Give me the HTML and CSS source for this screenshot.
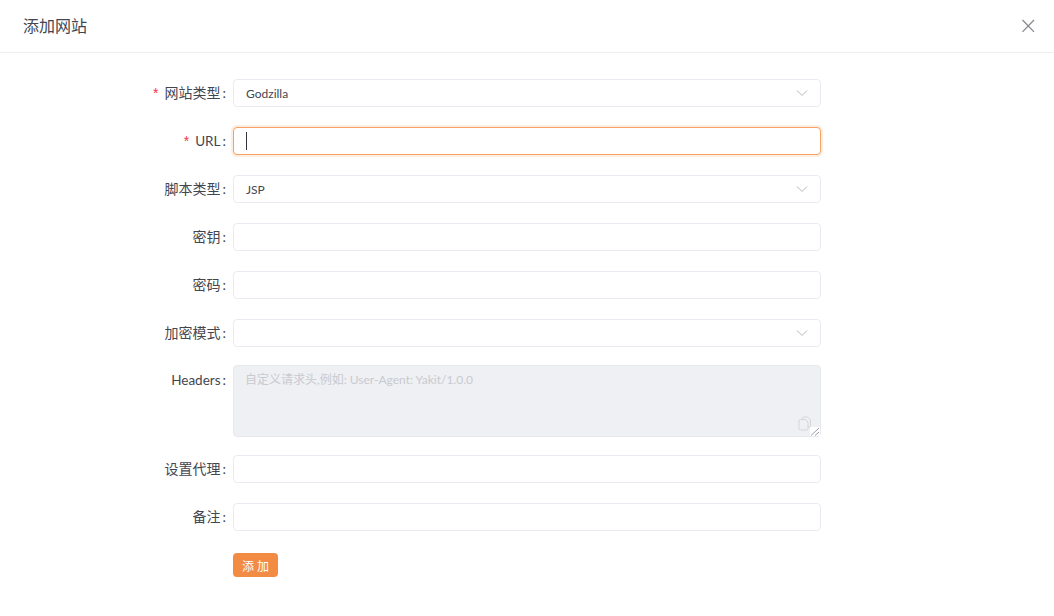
FILE: index.html
```html
<!DOCTYPE html>
<html lang="zh-CN">
<head>
    <meta charset="UTF-8">
    <meta name="viewport" content="width=device-width, initial-scale=1.0">
    <title>添加网站</title>
    <link rel="stylesheet" href="styles.css">
</head>
<body>
    <div class="modal">
        <header class="modal-header">
            <h1>添加网站</h1>
            <svg class="close-icon" width="14" height="14" viewBox="0 0 14 14">
                <path d="M1.5 1L13 12.8M13 1L1.5 12.8" stroke="#85868c" stroke-width="1.2" fill="none"/>
            </svg>
        </header>

        <form class="site-form">
            <div class="form-row">
                <label class="form-label"><span class="required">*</span>网站类型</label>
                <div class="field select-field">
                    <span class="select-value">Godzilla</span>
                    <svg class="arrow" width="12" height="8" viewBox="0 0 12 8"><path d="M1 1.5L6 6.5L11 1.5" stroke="#b4b8c2" fill="none"/></svg>
                </div>
            </div>

            <div class="form-row">
                <label class="form-label"><span class="required">*</span><span class="latin">URL</span></label>
                <div class="field field-focus"><span class="caret"></span></div>
            </div>

            <div class="form-row">
                <label class="form-label">脚本类型</label>
                <div class="field select-field">
                    <span class="select-value">JSP</span>
                    <svg class="arrow" width="12" height="8" viewBox="0 0 12 8"><path d="M1 1.5L6 6.5L11 1.5" stroke="#b4b8c2" fill="none"/></svg>
                </div>
            </div>

            <div class="form-row">
                <label class="form-label">密钥</label>
                <div class="field"></div>
            </div>

            <div class="form-row">
                <label class="form-label">密码</label>
                <div class="field"></div>
            </div>

            <div class="form-row">
                <label class="form-label">加密模式</label>
                <div class="field select-field">
                    <span class="select-value"></span>
                    <svg class="arrow" width="12" height="8" viewBox="0 0 12 8"><path d="M1 1.5L6 6.5L11 1.5" stroke="#b4b8c2" fill="none"/></svg>
                </div>
            </div>

            <div class="form-row form-row-area">
                <label class="form-label"><span class="latin">Headers</span></label>
                <div class="area-wrap">
                    <textarea class="area" placeholder="自定义请求头,例如: User-Agent: Yakit/1.0.0"></textarea>
                    <svg class="copy-icon" width="14" height="15" viewBox="0 0 14 15">
                        <path d="M4.5 3.5V2.5A1.5 1.5 0 0 1 6 1H9.5L12.5 4V9.5A1.5 1.5 0 0 1 11 11H10" stroke="#d3d5dc" fill="none"/>
                        <path d="M2.5 3.5H7.5L10 6V12.5A1.5 1.5 0 0 1 8.5 14H2.5A1.5 1.5 0 0 1 1 12.5V5A1.5 1.5 0 0 1 2.5 3.5Z" stroke="#d3d5dc" fill="none"/>
                    </svg>
                    <svg class="resize-grip" width="10" height="9" viewBox="0 0 10 9">
                        <path d="M0 0H10V9H0Z" fill="white"/>
                        <path d="M1 8.5L9 1M5 8.5L9 5" stroke="#9c9ea8" fill="none"/>
                    </svg>
                </div>
            </div>

            <div class="form-row">
                <label class="form-label">设置代理</label>
                <div class="field"></div>
            </div>

            <div class="form-row">
                <label class="form-label">备注</label>
                <div class="field"></div>
            </div>

            <div class="form-actions">
                <button type="button" class="add-button">添 加</button>
            </div>
        </form>
    </div>
</body>
</html>
```

FILE: styles.css
```css
* {
    margin: 0;
    padding: 0;
    box-sizing: border-box;
}

body {
    font-family: "Lato", "Noto Sans CJK SC", sans-serif;
    font-size: 12px;
    width: 1054px;
    height: 616px;
    background: white;
    color: #44464f;
    overflow: hidden;
}

.modal-header {
    height: 53px;
    padding: 0 19px 0 23px;
    border-bottom: 1px solid #eeeff3;
    display: flex;
    align-items: center;
    justify-content: space-between;
}

.modal-header h1 {
    font-size: 16px;
    font-weight: 400;
    line-height: 26px;
}

.site-form {
    padding-top: 26px;
    display: flex;
    flex-direction: column;
    gap: 20px;
}

.form-row {
    display: flex;
    height: 28px;
}

.form-row-area {
    height: 72px;
    margin: -2px 0;
}

.form-label {
    width: 233px;
    padding-right: 7px;
    font-size: 14px;
    line-height: 28px;
    text-align: right;
}

.form-label::after {
    content: ":";
    margin-left: 2px;
}

.form-row-area .form-label {
    line-height: 30px;
}

.latin {
    font-size: 13.5px;
}

.required {
    color: #f5343f;
    margin-right: 6px;
    font-family: "Liberation Sans", sans-serif;
}

.field {
    width: 588px;
    height: 28px;
    background: white;
    border: 1px solid #e9ebf2;
    border-radius: 4px;
    display: flex;
    align-items: center;
    padding: 0 12px;
}

.select-field {
    justify-content: space-between;
}

.select-value {
    font-size: 12px;
}

.field-focus {
    border-color: #f6a165;
    box-shadow: 0 0 0 2px #fdeee2;
}

.caret {
    width: 1px;
    height: 18px;
    background: #31343f;
}

.area-wrap {
    position: relative;
    width: 588px;
    height: 72px;
}

.area {
    display: block;
    width: 588px;
    height: 72px;
    padding: 5px 11px;
    background: #eff0f3;
    border: 1px solid #e8e9ee;
    border-radius: 4px;
    font-family: inherit;
    font-size: 12px;
    line-height: 18px;
    resize: none;
    outline: none;
}

.area::placeholder {
    color: #c8cad1;
}

.copy-icon {
    position: absolute;
    right: 9px;
    bottom: 6px;
}

.resize-grip {
    position: absolute;
    right: 1px;
    bottom: 1px;
}

.form-actions {
    padding-left: 233px;
    margin-top: 2px;
}

.add-button {
    width: 45px;
    height: 24px;
    background: #f28b44;
    color: white;
    border: none;
    border-radius: 4px;
    font-family: inherit;
    font-size: 12px;
    cursor: pointer;
}
```
